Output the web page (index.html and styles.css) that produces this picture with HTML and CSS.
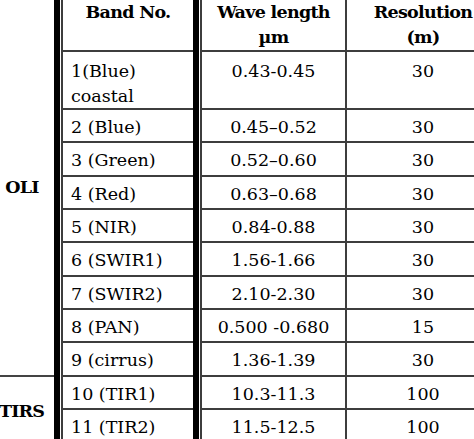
FILE: index.html
```html
<!DOCTYPE html>
<html>
<head>
<meta charset="utf-8">
<link rel="stylesheet" href="styles.css">
</head>
<body>
<div class="sheet">
  <div class="sensor oli">OLI</div>
  <div class="sensor tirs">TIRS</div>
  <div class="bar bar-a"></div>
  <div class="bar bar-b"></div>

  <div class="cell c1 head">Band No.</div>
  <div class="cell c2 head">Wave length<br>µm</div>
  <div class="cell c3 head">Resolution<br>(m)</div>

  <div class="cell c1 tall">1(Blue)<br>coastal</div>
  <div class="cell c2 tall">0.43-0.45</div>
  <div class="cell c3 tall">30</div>

  <div class="cell c1">2 (Blue)</div>
  <div class="cell c2">0.45–0.52</div>
  <div class="cell c3">30</div>

  <div class="cell c1">3 (Green)</div>
  <div class="cell c2">0.52–0.60</div>
  <div class="cell c3">30</div>

  <div class="cell c1">4 (Red)</div>
  <div class="cell c2">0.63–0.68</div>
  <div class="cell c3">30</div>

  <div class="cell c1">5 (NIR)</div>
  <div class="cell c2">0.84-0.88</div>
  <div class="cell c3">30</div>

  <div class="cell c1">6 (SWIR1)</div>
  <div class="cell c2">1.56-1.66</div>
  <div class="cell c3">30</div>

  <div class="cell c1">7 (SWIR2)</div>
  <div class="cell c2">2.10-2.30</div>
  <div class="cell c3">30</div>

  <div class="cell c1">8 (PAN)</div>
  <div class="cell c2">0.500 -0.680</div>
  <div class="cell c3">15</div>

  <div class="cell c1">9 (cirrus)</div>
  <div class="cell c2">1.36-1.39</div>
  <div class="cell c3">30</div>

  <div class="cell c1">10 (TIR1)</div>
  <div class="cell c2">10.3-11.3</div>
  <div class="cell c3">100</div>

  <div class="cell c1">11 (TIR2)</div>
  <div class="cell c2">11.5-12.5</div>
  <div class="cell c3">100</div>
</div>
</body>
</html>
```

FILE: styles.css
```css
html, body {
  margin: 0;
  padding: 0;
  background: #ffffff;
  overflow: hidden;
}

.sheet {
  margin-top: -6px;
  display: grid;
  grid-template-columns: 54px 6px 1px 132px 6px 1px 145px 154px;
  grid-template-rows: 58px 58px repeat(10, 33.33px);
  width: 499px;
  font-family: "DejaVu Serif", "Liberation Serif", serif;
  font-size: 17.5px;
  color: #000;
}

.bar {
  background: #000;
  grid-row: 1 / 13;
}
.bar-a { grid-column: 2; }
.bar-b { grid-column: 5; }

.sensor {
  grid-column: 1;
  display: flex;
  align-items: center;
  justify-content: center;
  font-weight: bold;
  letter-spacing: -0.8px;
  padding-right: 10px;
}
.oli {
  grid-row: 1 / 11;
  border-bottom: 2px solid #444;
  padding-top: 6px;
}
.tirs {
  grid-row: 11 / 13;
  padding-top: 2px;
  padding-right: 11px;
}

.cell {
  border-bottom: 2px solid #3d3d3d;
  border-left: 2px solid #3d3d3d;
  line-height: 24.5px;
  padding: 3px 8px 0;
  white-space: nowrap;
  display: flex;
  align-items: center;
}
.c1 { grid-column: 4; }
.c2 { grid-column: 7; justify-content: center; text-align: center; }
.c3 { grid-column: 8; justify-content: center; text-align: center; }

.head {
  font-weight: bold;
  letter-spacing: -0.7px;
  align-items: flex-start;
  padding-top: 6px;
}
.head.c1 { justify-content: center; }
.tall {
  align-items: flex-start;
  padding-top: 7px;
}
```
